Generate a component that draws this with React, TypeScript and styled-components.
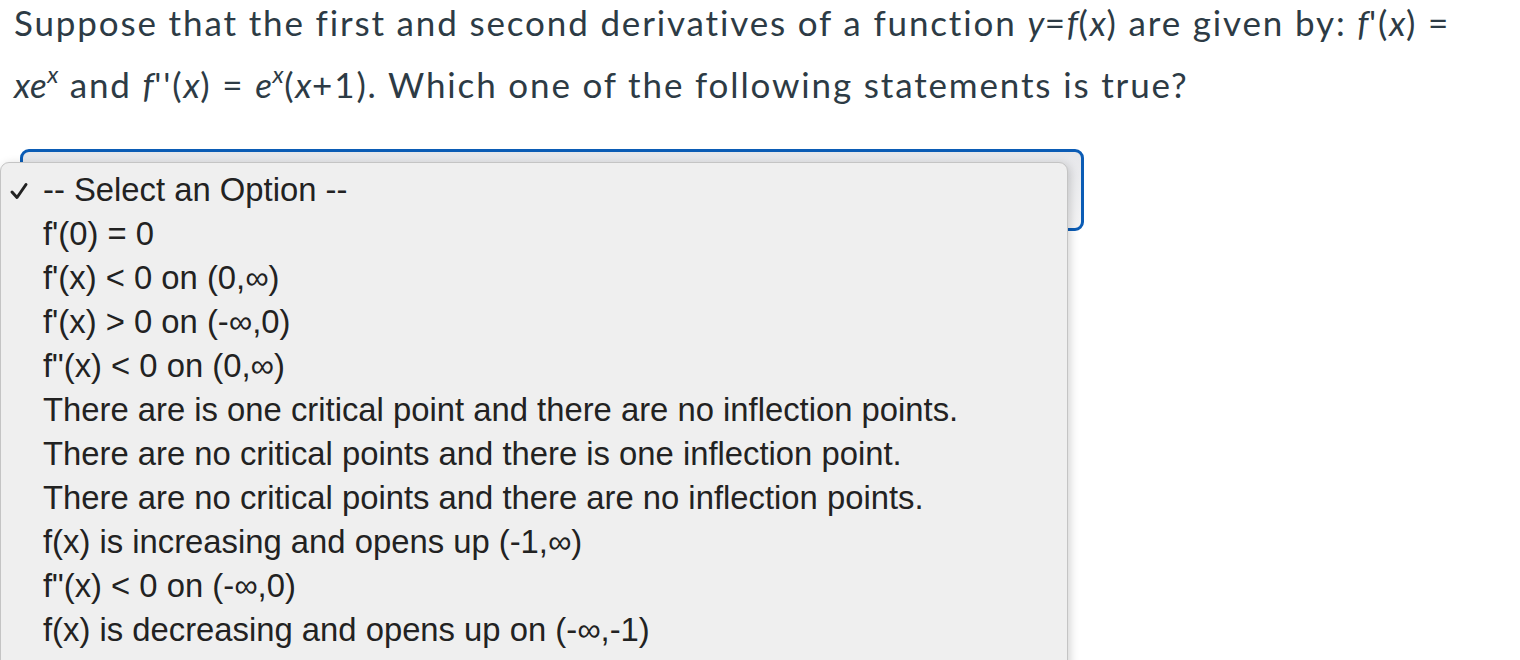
import React from 'react'
import styled, { createGlobalStyle } from 'styled-components'

const GlobalStyle = createGlobalStyle`
  html, body {
    margin: 0;
    padding: 0;
    background: #ffffff;
    overflow: hidden;
  }
`

const options = [
  'f\'(0) = 0',
  'f\'(x) < 0 on (0,∞)',
  'f\'(x) > 0 on (-∞,0)',
  'f"(x) < 0 on (0,∞)',
  'There are is one critical point and there are no inflection points.',
  'There are no critical points and there is one inflection point.',
  'There are no critical points and there are no inflection points.',
  'f(x) is increasing and opens up (-1,∞)',
  'f"(x) < 0 on (-∞,0)',
  'f(x) is decreasing and opens up on (-∞,-1)'
]

export default function App() {
  return (
    <Page>
      <GlobalStyle />
      <Question>
        Suppose that the first and second derivatives of a function <M>y</M>=<M>f</M>(<M>x</M>) are given by: <M>f</M>'(<M>x</M>) =
        <br />
        <M>xe<Sup>x</Sup></M> and <M>f</M>''(<M>x</M>) = <M>e<Sup>x</Sup></M>(<M>x</M>+1). Which one of the following statements is true?
      </Question>
      <SelectArea>
        <SelectBox />
        <Menu>
          <Option $checked>
            <Check>
              <svg width="20" height="20" viewBox="0 0 20 20">
                <path d="M3 11 L8 16.5 L17 3.5" fill="none" stroke="#222" strokeWidth="3" strokeLinecap="round" strokeLinejoin="round" />
              </svg>
            </Check>
            -- Select an Option --
          </Option>
          {options.map((o) => (
            <Option key={o}>{o}</Option>
          ))}
        </Menu>
      </SelectArea>
    </Page>
  )
}

const Page = styled.div`
  width: 1520px;
  height: 660px;
  position: relative;
  font-family: Lato, 'Liberation Sans', sans-serif;
  color: #2d3b45;
`

const Question = styled.p`
  margin: 0;
  padding: 0 0 0 14px;
  font-size: 35px;
  letter-spacing: 1.85px;
  line-height: 62px;
  position: relative;
  top: -9px;
`

const M = styled.i`
  font-style: italic;
  letter-spacing: 0.5px;
`

const Sup = styled.sup`
  font-size: 24px;
  vertical-align: 15px;
  line-height: 0;
`

const SelectArea = styled.div`
  position: relative;
  margin-top: 25px;
`

const SelectBox = styled.div`
  margin-left: 20px;
  width: 1064px;
  height: 82px;
  box-sizing: border-box;
  border: 3px solid #0b5cb5;
  border-radius: 9px;
  background: linear-gradient(#e6e7ea, #f4f4f5);
`

const Menu = styled.div`
  position: absolute;
  left: 0;
  top: 13px;
  width: 1068px;
  height: 520px;
  box-sizing: border-box;
  background: #efefef;
  border: 1px solid #c4c4c4;
  border-radius: 9px;
  box-shadow: 2px 2px 10px rgba(0, 0, 0, 0.18);
  padding-top: 5px;
  font-family: 'Liberation Sans', Arial, sans-serif;
  color: #222222;
`

const Option = styled.div<{ $checked?: boolean }>`
  position: relative;
  height: 44px;
  line-height: 44px;
  padding-left: 42px;
  font-size: 32.8px;
  white-space: nowrap;
`

const Check = styled.span`
  position: absolute;
  left: 8px;
  top: 13px;
  width: 20px;
  height: 20px;
  display: flex;
`
